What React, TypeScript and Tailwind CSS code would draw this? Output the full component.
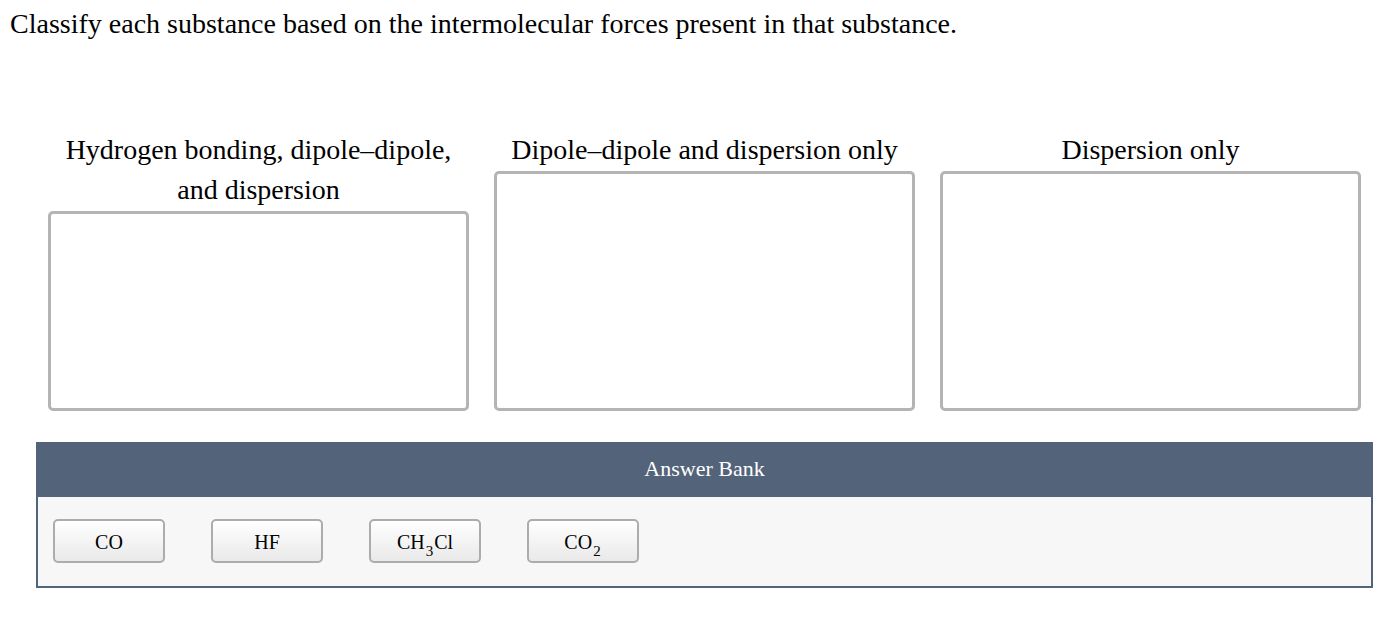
import React from "react";

const columns = [
  { title: "Hydrogen bonding, dipole–dipole, and dispersion" },
  { title: "Dipole–dipole and dispersion only" },
  { title: "Dispersion only" },
];

function Sub({ children }: { children: React.ReactNode }) {
  return (
    <span className="relative top-[7px] mx-[1px] text-[15px] leading-none">{children}</span>
  );
}

const answers: React.ReactNode[] = [
  "CO",
  "HF",
  <>
    CH<Sub>3</Sub>Cl
  </>,
  <>
    CO<Sub>2</Sub>
  </>,
];

export default function App() {
  return (
    <div
      className="min-h-[620px] bg-white text-black"
      style={{ fontFamily: '"Liberation Serif", "Times New Roman", serif' }}
    >
      <p className="pl-[10px] pt-[8px] text-[28px] leading-[32px]">
        Classify each substance based on the intermolecular forces present in that substance.
      </p>

      {/* drop targets */}
      <div className="mt-[90px] ml-[48px] flex w-[1313px] items-end gap-[25px]">
        {columns.map((c) => (
          <div key={c.title} className="flex w-[421px] flex-col">
            <h2 className="mb-[1px] px-2 text-center text-[28px] leading-[40px] font-normal">
              {c.title}
            </h2>
            <div
              className={
                "w-full rounded-[5px] border-[3px] border-[#b4b4b4] bg-white " +
                (c.title.startsWith("Hydrogen") ? "h-[200px]" : "h-[240px]")
              }
            />
          </div>
        ))}
      </div>

      {/* answer bank */}
      <div className="mt-[31px] ml-[36px] w-[1337px] border-2 border-t-0 border-[#536379]">
        <div className="flex h-[55px] items-center justify-center bg-[#536379] pb-[3px] text-[22px] text-white">
          Answer Bank
        </div>
        <div className="flex gap-[46px] bg-[#f7f7f7] pt-[22px] pb-[23px] pl-[15px]">
          {answers.map((a, i) => (
            <button
              key={i}
              className="flex h-[44px] w-[112px] items-center justify-center rounded-[5px] border-2 border-[#acacac] bg-gradient-to-b from-white to-[#e9e9e9] text-[20px] text-black"
            >
              <span className="relative top-[1px]">{a}</span>
            </button>
          ))}
        </div>
      </div>
    </div>
  );
}
